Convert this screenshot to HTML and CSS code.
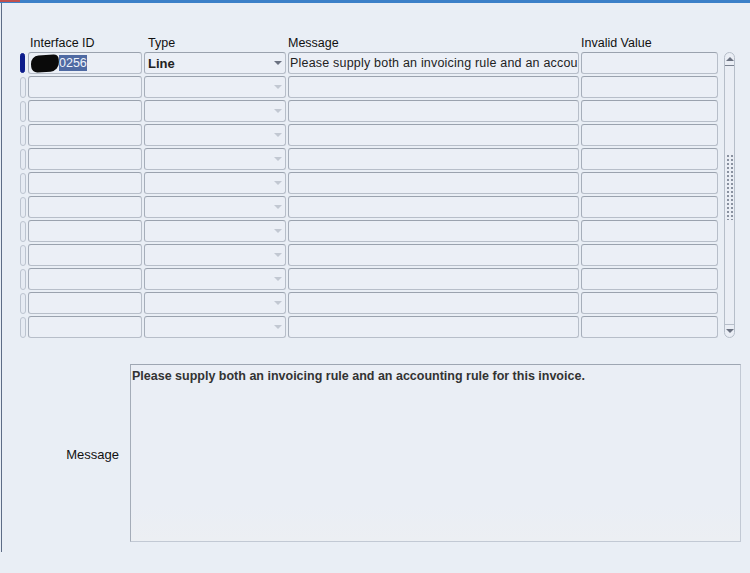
FILE: index.html
```html
<!DOCTYPE html>
<html>
<head>
<meta charset="utf-8">
<link rel="stylesheet" href="styles.css">
</head>
<body>
<div class="topbar"><span class="topbar-red"></span></div>
<div class="frame">
  <div class="grid">
    <div class="hdr hdr-ind"></div>
    <div class="hdr hdr-id">Interface ID</div>
    <div class="hdr hdr-type">Type</div>
    <div class="hdr hdr-msg">Message</div>
    <div class="hdr hdr-inv">Invalid Value</div>
    <div class="hdr hdr-sb"></div>
    <div class="scroll">
      <div class="sb-up"><span class="tri-up"></span></div>
      <div class="sb-track"><div class="grip"></div></div>
      <div class="sb-down"><span class="tri-down"></span></div>
    </div>

    <div class="ind ind-cur"></div>
    <div class="fld fld-id"><span class="redact"></span><span class="sel">0256</span></div>
    <div class="fld fld-type"><span class="bold">Line</span><span class="arrow dark"></span></div>
    <div class="fld fld-msg">Please supply both an invoicing rule and an accounting rule for this invoice.</div>
    <div class="fld"></div>

    <div class="ind"></div><div class="fld"></div><div class="fld fld-type"><span class="arrow"></span></div><div class="fld"></div><div class="fld"></div>
    <div class="ind"></div><div class="fld"></div><div class="fld fld-type"><span class="arrow"></span></div><div class="fld"></div><div class="fld"></div>
    <div class="ind"></div><div class="fld"></div><div class="fld fld-type"><span class="arrow"></span></div><div class="fld"></div><div class="fld"></div>
    <div class="ind"></div><div class="fld"></div><div class="fld fld-type"><span class="arrow"></span></div><div class="fld"></div><div class="fld"></div>
    <div class="ind"></div><div class="fld"></div><div class="fld fld-type"><span class="arrow"></span></div><div class="fld"></div><div class="fld"></div>
    <div class="ind"></div><div class="fld"></div><div class="fld fld-type"><span class="arrow"></span></div><div class="fld"></div><div class="fld"></div>
    <div class="ind"></div><div class="fld"></div><div class="fld fld-type"><span class="arrow"></span></div><div class="fld"></div><div class="fld"></div>
    <div class="ind"></div><div class="fld"></div><div class="fld fld-type"><span class="arrow"></span></div><div class="fld"></div><div class="fld"></div>
    <div class="ind"></div><div class="fld"></div><div class="fld fld-type"><span class="arrow"></span></div><div class="fld"></div><div class="fld"></div>
    <div class="ind"></div><div class="fld"></div><div class="fld fld-type"><span class="arrow"></span></div><div class="fld"></div><div class="fld"></div>
    <div class="ind"></div><div class="fld"></div><div class="fld fld-type"><span class="arrow"></span></div><div class="fld"></div><div class="fld"></div>
  </div>

  <div class="detail">
    <div class="detail-label">Message</div>
    <div class="detail-box">Please supply both an invoicing rule and an accounting rule for this invoice.</div>
  </div>
</div>
</body>
</html>
```

FILE: styles.css
```css
html, body {
  margin: 0;
  padding: 0;
}
body {
  width: 750px;
  height: 573px;
  overflow: hidden;
  background: #e9eef5;
  font-family: "Liberation Sans", Arial, sans-serif;
  color: #111;
}
.topbar {
  height: 3px;
  background: #3c80c8;
  position: relative;
}
.topbar-red {
  position: absolute;
  left: 0;
  top: 0;
  width: 20px;
  height: 2px;
  background: #c0504d;
}
.frame {
  margin-left: 1px;
  border-left: 1px solid #5d6c86;
  height: 549px;
  padding-top: 33px;
  box-sizing: border-box;
  padding-left: 17px;
}
.grid {
  display: grid;
  grid-template-columns: 7px 114px 142px 291px 137px 15px;
  grid-template-rows: 14px repeat(12, 22px);
  column-gap: 2px;
  row-gap: 2px;
}
.grid > .scroll {
  grid-column: 6;
  grid-row: 2 / span 12;
  margin-left: 4px;
}
.hdr {
  font-size: 12.5px;
  line-height: 16px;
  white-space: nowrap;
  margin-top: -1px;
}
.hdr-id { padding-left: 2px; }
.hdr-type { padding-left: 4px; }
.hdr-msg { padding-left: 0; }
.hdr-inv { padding-left: 0; }
.ind {
  grid-column: 1;
  box-sizing: border-box;
  border: 1px solid #bcc4d0;
  border-radius: 3px;
  background: #e6ebf3;
  margin: 1px 0 0 1px;
}
.ind-cur {
  background: #0c1c8c;
  border-color: #0c1c8c;
  margin: 1px 1px 1px 1px;
}
.fld {
  box-sizing: border-box;
  border: 1px solid #b7bec9;
  border-top-color: #9aa2ae;
  border-left-color: #a6aeba;
  border-radius: 3px;
  background: #ebeff6;
  font-size: 12.5px;
  line-height: 21px;
  padding-left: 1px;
  white-space: nowrap;
  overflow: hidden;
  color: #222;
  position: relative;
}
.fld-msg {
  padding-left: 1px;
  letter-spacing: 0.2px;
}
.fld-type {
  padding-left: 3px;
}
.bold {
  font-weight: bold;
  font-size: 13px;
  color: #222;
}
.sel {
  background: #4f6aa3;
  color: #eef2fa;
  padding: 1px 0 1px 0;
}
.redact {
  display: inline-block;
  width: 28px;
  height: 17px;
  background: #0a0a0a;
  border-radius: 8px 5px 9px 6px;
  vertical-align: -5px;
  margin-left: 1px;
  transform: rotate(-4deg);
}
.arrow {
  position: absolute;
  right: 3px;
  top: 8px;
  width: 0;
  height: 0;
  border-left: 4px solid transparent;
  border-right: 4px solid transparent;
  border-top: 4px solid #c2c8d2;
}
.arrow.dark {
  border-top-color: #6a7180;
}
.scroll {
  box-sizing: border-box;
  border: 1px solid #b6bec9;
  border-radius: 8px;
  display: flex;
  flex-direction: column;
  background: #eaeef5;
}
.sb-up, .sb-down {
  height: 12px;
  display: flex;
  justify-content: center;
  align-items: center;
}
.sb-up {
  border-bottom: 1px solid #7a8290;
}
.sb-down {
  border-top: 1px solid #b6bec9;
}
.tri-up {
  width: 0;
  height: 0;
  border-left: 4px solid transparent;
  border-right: 4px solid transparent;
  border-bottom: 4px solid #6a7180;
}
.tri-down {
  width: 0;
  height: 0;
  border-left: 4px solid transparent;
  border-right: 4px solid transparent;
  border-top: 4px solid #6a7180;
}
.sb-track {
  flex: 1;
  display: flex;
  justify-content: center;
  padding-top: 88px;
}
.grip {
  width: 8px;
  height: 66px;
  background-image: radial-gradient(circle, #8a92a0 0.8px, transparent 1.1px);
  background-size: 4px 4px;
}
.detail {
  display: flex;
  align-items: center;
  margin-top: 26px;
  margin-left: -19px;
}
.detail-label {
  width: 119px;
  text-align: right;
  font-size: 13px;
  color: #111;
  margin-right: 11px;
  padding-top: 2px;
}
.detail-box {
  width: 611px;
  height: 178px;
  box-sizing: border-box;
  border: 1px solid #c2c9d4;
  border-top-color: #9ea6b2;
  border-left-color: #a4acb8;
  background: linear-gradient(#eaeef5, #eaeef5 80%, #eceff3);
  font-weight: bold;
  font-size: 12.5px;
  color: #333;
  padding: 4px 0 0 1px;
  line-height: 14px;
}
```
